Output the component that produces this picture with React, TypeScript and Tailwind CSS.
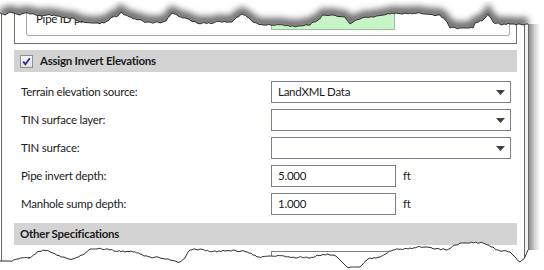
import React from 'react';

// key points of the torn edges, picked off the screenshot
const topTear: [number, number][] = [
  [0, 13], [5, 15], [10, 12], [20, 15], [28, 13], [40, 15], [58, 16], [72, 18], [80, 22],
  [92, 23], [104, 23], [109, 20], [113, 17], [116, 17],
  [121, 12], [126, 15], [133, 19], [147, 22], [160, 23], [166, 21], [172, 13], [177, 15],
  [183, 18], [197, 23], [232, 22], [237, 17], [242, 14], [247, 17], [253, 22], [263, 25],
  [300, 26], [310, 25], [313, 22], [318, 20], [323, 15], [345, 17], [350, 24], [356, 20],
  [370, 17], [390, 14], [410, 13], [440, 15], [447, 22], [450, 28], [473, 28], [475, 23],
  [482, 21], [486, 17], [488, 14], [491, 18], [493, 22], [502, 25], [510, 24], [528, 24],
];

const bottomTear: [number, number][] = [
  [0, 261], [10, 261], [17, 259], [30, 258], [37, 252], [43, 250], [53, 253], [63, 257],
  [73, 259], [83, 255], [90, 249], [97, 249], [110, 250], [123, 251], [133, 252], [140, 254],
  [150, 257], [160, 258], [180, 262], [185, 258], [190, 250], [200, 249], [217, 252],
  [233, 250], [247, 252], [257, 257], [270, 256], [293, 257], [310, 258], [317, 255],
  [327, 254], [337, 257], [347, 267], [360, 267], [370, 258], [380, 257], [393, 250],
  [410, 248], [427, 247], [447, 250], [460, 243], [483, 243], [493, 247], [500, 251],
  [510, 252], [520, 262], [525, 257], [528, 250],
];

// small jaggies between the key points
const jagged = (pts: [number, number][]) => {
  const out: string[] = [];
  let n = 0;
  for (let i = 0; i < pts.length - 1; i++) {
    const [x1, y1] = pts[i];
    const [x2, y2] = pts[i + 1];
    const steps = Math.max(1, Math.round((x2 - x1) / 2));
    for (let s = 0; s < steps; s++) {
      const t = s / steps;
      const j = s === 0 ? 0 : Math.round(Math.sin(n * 12.9898) * 43758.5453) % 2;
      out.push(`${(x1 + (x2 - x1) * t).toFixed(1)},${(y1 + (y2 - y1) * t + j * 0.8).toFixed(1)}`);
      n++;
    }
  }
  const last = pts[pts.length - 1];
  out.push(`${last[0]},${last[1]}`);
  return out.join(' ');
};

const TornEdges = () => {
  const top = jagged(topTear);
  const bottom = jagged(bottomTear);
  return (
    <svg className="pointer-events-none absolute inset-0" width="544" height="270" viewBox="0 0 544 270">
      <defs>
        <filter id="blur" x="-10%" y="-50%" width="120%" height="200%">
          <feGaussianBlur stdDeviation="3" />
        </filter>
        <clipPath id="above">
          <polygon points={`0,0 ${top} 544,24 544,0`} />
        </clipPath>
      </defs>
      <polygon points={`0,0 ${top} 544,24 544,0`} fill="#ffffff" />
      <g clipPath="url(#above)">
        <polyline points={top} fill="none" stroke="#6a6a6a" strokeWidth="9" filter="url(#blur)" transform="translate(0,-2)" />
      </g>
      <polyline points={top} fill="none" stroke="#2e2e2e" strokeWidth="1" />
      <polygon points={`${bottom} 544,250 544,270 0,270`} fill="#ffffff" />
      <polyline points={bottom} fill="none" stroke="#2e2e2e" strokeWidth="1" />
    </svg>
  );
};

const Caret = () => (
  <svg width="9" height="5" viewBox="0 0 9 5">
    <path d="M0 0h9L4.5 5z" fill="#404040" />
  </svg>
);

const Dropdown = ({ value }: { value?: string }) => (
  <div className="flex h-[22px] w-[240px] items-center justify-between border border-[#7e7e8e] bg-white pr-[5px] pl-[6px]">
    <span>{value}</span>
    <Caret />
  </div>
);

const TextBox = ({ value, unit }: { value: string; unit: string }) => (
  <div className="flex items-center">
    <div className="flex h-[22px] w-[125px] items-center border border-[#7e7e8e] bg-white pl-[6px]">{value}</div>
    <span className="ml-[7px]">{unit}</span>
  </div>
);

const Row = ({ label, children }: { label: string; children: React.ReactNode }) => (
  <div className="flex h-[22px] shrink-0 items-center">
    <span className="w-[257px] pl-[7px]">{label}</span>
    {children}
  </div>
);

const SectionBar = ({ title, checked }: { title: string; checked?: boolean }) => (
  <div className="flex h-[22px] items-center bg-[#d3d3d3] pl-[6px] font-bold">
    {checked && (
      <div className="mr-[7px] flex h-[13px] w-[13px] items-center justify-center border border-[#8e8f8f] bg-gradient-to-b from-[#f4f4f4] to-[#e2e2e2]">
        <svg width="9" height="9" viewBox="0 0 9 9">
          <path d="M1.2 4.6L3.4 7.2L7.8 1.2" fill="none" stroke="#27318b" strokeWidth="1.8" />
        </svg>
      </div>
    )}
    <span>{title}</span>
  </div>
);

export default function App() {
  return (
    <div className="relative flex h-[270px] w-[544px] overflow-hidden bg-white font-['Lato',sans-serif] text-[11.5px] tracking-[-0.25px] text-[#1b1b1b]">
      <div className="ml-[1px] w-[1px] shrink-0 bg-[#6c6c6c]" />
      <div className="flex w-[522px] shrink-0 flex-col pr-[7px] pl-[12px]">
        {/* group box cut off by the tear */}
        <div className="flex h-[44px] shrink-0 flex-col border-x border-b border-[#6f6f80] pr-[6px] pl-[11px]">
          <div className="flex h-[36px] items-end rounded-b-[3px] border-x border-b border-[#ababab] pb-[5px]">
            <span className="w-[244px] pl-[9px] leading-[22px]">Pipe ID prefix:</span>
            <div className="h-[22px] w-[124px] border border-[#9cbf9c] bg-[#c8f5c8]" />
          </div>
        </div>
        <div className="mt-[6px] shrink-0">
          <SectionBar title="Assign Invert Elevations" checked />
        </div>
        <div className="mt-[9px] flex shrink-0 flex-col gap-[6px]">
          <Row label="Terrain elevation source:">
            <Dropdown value="LandXML Data" />
          </Row>
          <Row label="TIN surface layer:">
            <Dropdown />
          </Row>
          <Row label="TIN surface:">
            <Dropdown />
          </Row>
          <Row label="Pipe invert depth:">
            <TextBox value="5.000" unit="ft" />
          </Row>
          <Row label="Manhole sump depth:">
            <TextBox value="1.000" unit="ft" />
          </Row>
        </div>
        <div className="mt-[8px] shrink-0">
          <SectionBar title="Other Specifications" />
        </div>
        <div className="mt-[6px] shrink-0">
          <Row label="Pipe ID prefix:">
            <TextBox value="1F" unit="" />
          </Row>
        </div>
      </div>
      {/* window frame on the right and its drop shadow */}
      <div className="w-[5px] shrink-0 border-x border-[#666666] bg-[#f0f0f0]" />
      <div className="w-[11px] shrink-0 bg-gradient-to-r from-[#8c8c8c] via-[#d0d0d0] to-white" />
      <TornEdges />
    </div>
  );
}
